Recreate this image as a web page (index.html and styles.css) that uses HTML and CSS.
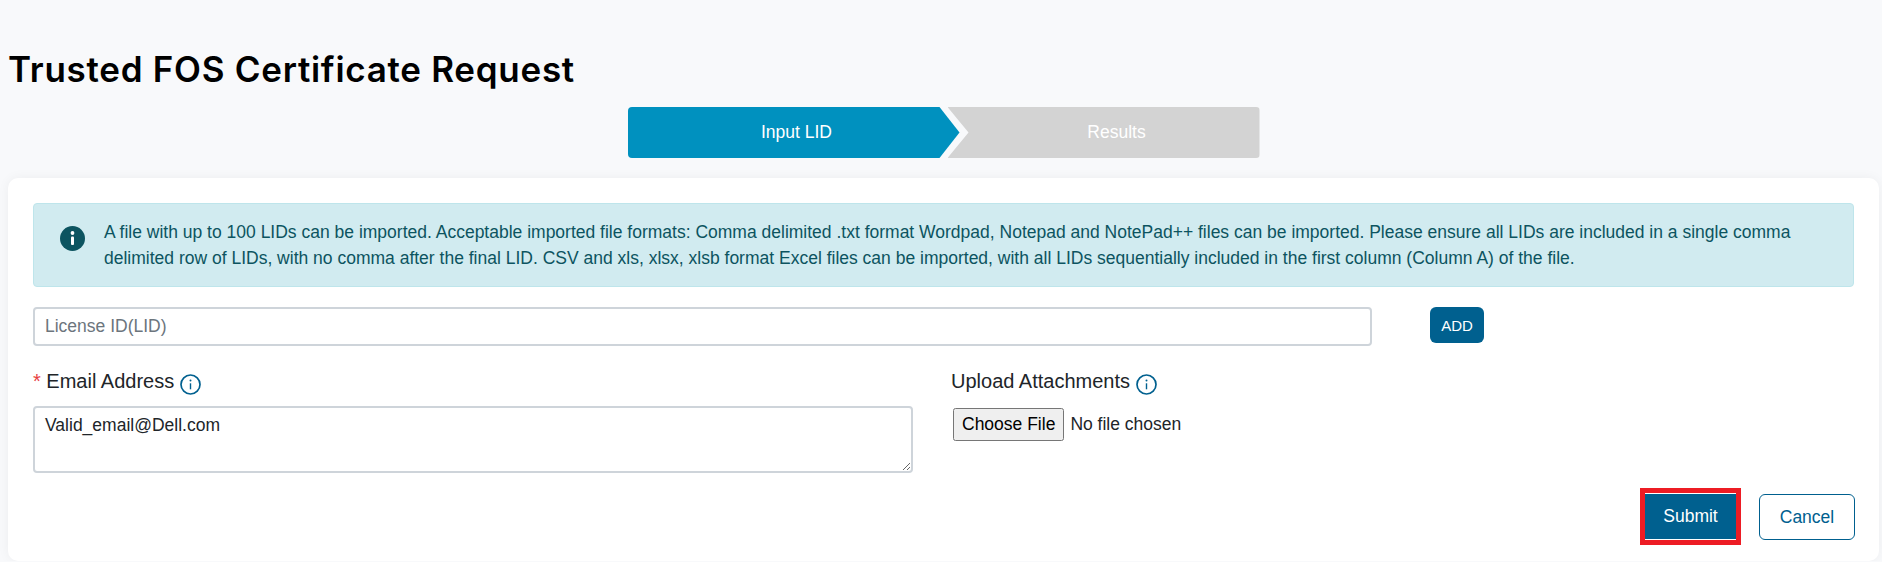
FILE: index.html
```html
<!DOCTYPE html>
<html lang="en">
<head>
    <meta charset="UTF-8">
    <title>Trusted FOS Certificate Request</title>
    <link rel="stylesheet" href="styles.css">
</head>
<body>
    <h1 class="page-title">Trusted FOS Certificate Request</h1>

    <!-- steps -->
    <div class="stepper">
        <div class="step step-active">Input LID</div>
        <div class="step step-next">Results</div>
    </div>

    <div class="card">
        <div class="alert">
            <svg class="alert-icon" viewBox="0 0 25 25" aria-hidden="true">
                <circle cx="12.5" cy="12.5" r="12.5" fill="#0c5460"/>
                <circle cx="12.5" cy="7" r="1.9" fill="#fff"/>
                <rect x="11" y="10.5" width="3" height="8.5" rx="1" fill="#fff"/>
            </svg>
            <p class="alert-text">A file with up to 100 LIDs can be imported. Acceptable imported file formats: Comma delimited .txt format Wordpad, Notepad and NotePad++ files can be imported. Please ensure all LIDs are included in a single comma delimited row of LIDs, with no comma after the final LID. CSV and xls, xlsx, xlsb format Excel files can be imported, with all LIDs sequentially included in the first column (Column A) of the file.</p>
        </div>

        <div class="lid-row">
            <input class="field lid-input" type="text" placeholder="License ID(LID)">
            <button class="btn-add" type="button">ADD</button>
        </div>

        <div class="form-cols">
            <div class="col-email">
                <label class="label"><span class="required">*</span> Email Address
                    <svg class="info-icon" viewBox="0 0 21 21" aria-hidden="true">
                        <circle cx="10.5" cy="10.5" r="9.5" fill="none" stroke="#00608f" stroke-width="1.7"/>
                        <circle cx="10.5" cy="6.6" r="1" fill="#00608f"/>
                        <rect x="9.8" y="9.3" width="1.4" height="6" fill="#00608f"/>
                    </svg>
                </label>
                <textarea class="field email-input">Valid_email@Dell.com</textarea>
            </div>
            <div class="col-upload">
                <label class="label">Upload Attachments
                    <svg class="info-icon" viewBox="0 0 21 21" aria-hidden="true">
                        <circle cx="10.5" cy="10.5" r="9.5" fill="none" stroke="#00608f" stroke-width="1.7"/>
                        <circle cx="10.5" cy="6.6" r="1" fill="#00608f"/>
                        <rect x="9.8" y="9.3" width="1.4" height="6" fill="#00608f"/>
                    </svg>
                </label>
                <input class="file-input" type="file">
            </div>
        </div>

        <div class="actions">
            <button class="btn-submit" type="button">Submit</button>
            <button class="btn-cancel" type="button">Cancel</button>
        </div>
    </div>
</body>
</html>
```

FILE: styles.css
```css
* {
    box-sizing: border-box;
}
body {
    margin: 0;
    padding: 0 3px 0 8px;
    background-color: #f8f9fb;
    font-family: "Liberation Sans", Arial, sans-serif;
    font-size: 17.5px;
    color: #212529;
    overflow: hidden;
}
.page-title {
    margin: 0;
    padding-top: 49px;
    height: 107px;
    font-family: Inter, sans-serif;
    font-size: 35px;
    font-weight: 600;
    letter-spacing: 0.72px;
    line-height: 40px;
    color: #000;
}
.stepper {
    display: flex;
    justify-content: center;
    height: 51px;
    margin-bottom: 20px;
}
.step {
    display: flex;
    align-items: center;
    justify-content: center;
    color: #fff;
    line-height: 48px;
    padding-bottom: 2px;
}
.step-active {
    width: 332px;
    padding-left: 6px;
    background-color: #0091bf;
    border-radius: 4px 0 0 4px;
    clip-path: polygon(0 0, 312px 0, 100% 50%, 312px 100%, 0 100%);
}
.step-next {
    width: 312px;
    margin-left: -12px;
    padding-left: 26px;
    background-color: #d3d3d3;
    border-radius: 0 4px 4px 0;
    clip-path: polygon(0 0, 100% 0, 100% 100%, 0 100%, 21px 50%);
}
.card {
    height: 383px;
    padding: 25px;
    background-color: #fff;
    border-radius: 10px;
    box-shadow: 0 0 12px rgba(0, 0, 0, 0.05);
}
.alert {
    display: flex;
    align-items: center;
    height: 84px;
    padding: 0 20px 0 26px;
    background-color: #d1ebf0;
    border: 1px solid #bee5eb;
    border-radius: 4px;
    color: #0c5460;
}
.alert-icon {
    flex: none;
    width: 25px;
    height: 25px;
    margin-right: 19px;
    margin-bottom: 14px;
}
.alert-text {
    margin: 0;
    line-height: 26px;
}
.field {
    border: 2px solid #ced4da;
    border-radius: 4px;
    background-color: #fff;
    font-family: inherit;
    font-size: 17.5px;
    color: #212529;
    outline: none;
}
.field::placeholder {
    color: #6c757d;
}
.lid-row {
    display: flex;
    align-items: flex-start;
    margin-top: 20px;
}
.lid-input {
    width: 1339px;
    height: 39px;
    padding: 0 10px;
}
.btn-add {
    width: 54px;
    height: 36px;
    margin-left: 58px;
    padding: 0;
    border: none;
    border-radius: 6px;
    background-color: #00608f;
    color: #fff;
    font-family: inherit;
    font-size: 15px;
}
.form-cols {
    display: flex;
    margin-top: 22px;
}
.col-email {
    width: 880px;
}
.col-upload {
    margin-left: 38px;
}
.label {
    display: block;
    height: 38px;
    font-size: 20px;
    line-height: 26px;
}
.required {
    color: #e8403f;
}
.info-icon {
    width: 21px;
    height: 21px;
    margin-left: 0;
    vertical-align: -7px;
}
.email-input {
    display: block;
    width: 100%;
    height: 67px;
    padding: 7px 10px;
    resize: vertical;
}
.file-input {
    display: block;
    margin-top: 2px;
    margin-left: 2px;
    font-family: inherit;
    font-size: 17.5px;
    color: #212529;
}
.file-input::file-selector-button {
    height: 33px;
    padding: 0 7px;
    margin-right: 6px;
}
.actions {
    display: flex;
    justify-content: flex-end;
    gap: 23px;
    margin-top: 20px;
    margin-right: -1px;
}
.btn-submit {
    width: 91px;
    height: 47px;
    border: solid #fff;
    border-width: 1px 0;
    background-color: #00608f;
    color: #fff;
    font-family: inherit;
    font-size: 17.5px;
    outline: 5px solid #ed1c24;
}
.btn-cancel {
    width: 96px;
    height: 46px;
    margin-top: 1px;
    border: 1px solid #00608f;
    border-radius: 6px;
    background-color: #fff;
    color: #00608f;
    font-family: inherit;
    font-size: 17.5px;
}
```
